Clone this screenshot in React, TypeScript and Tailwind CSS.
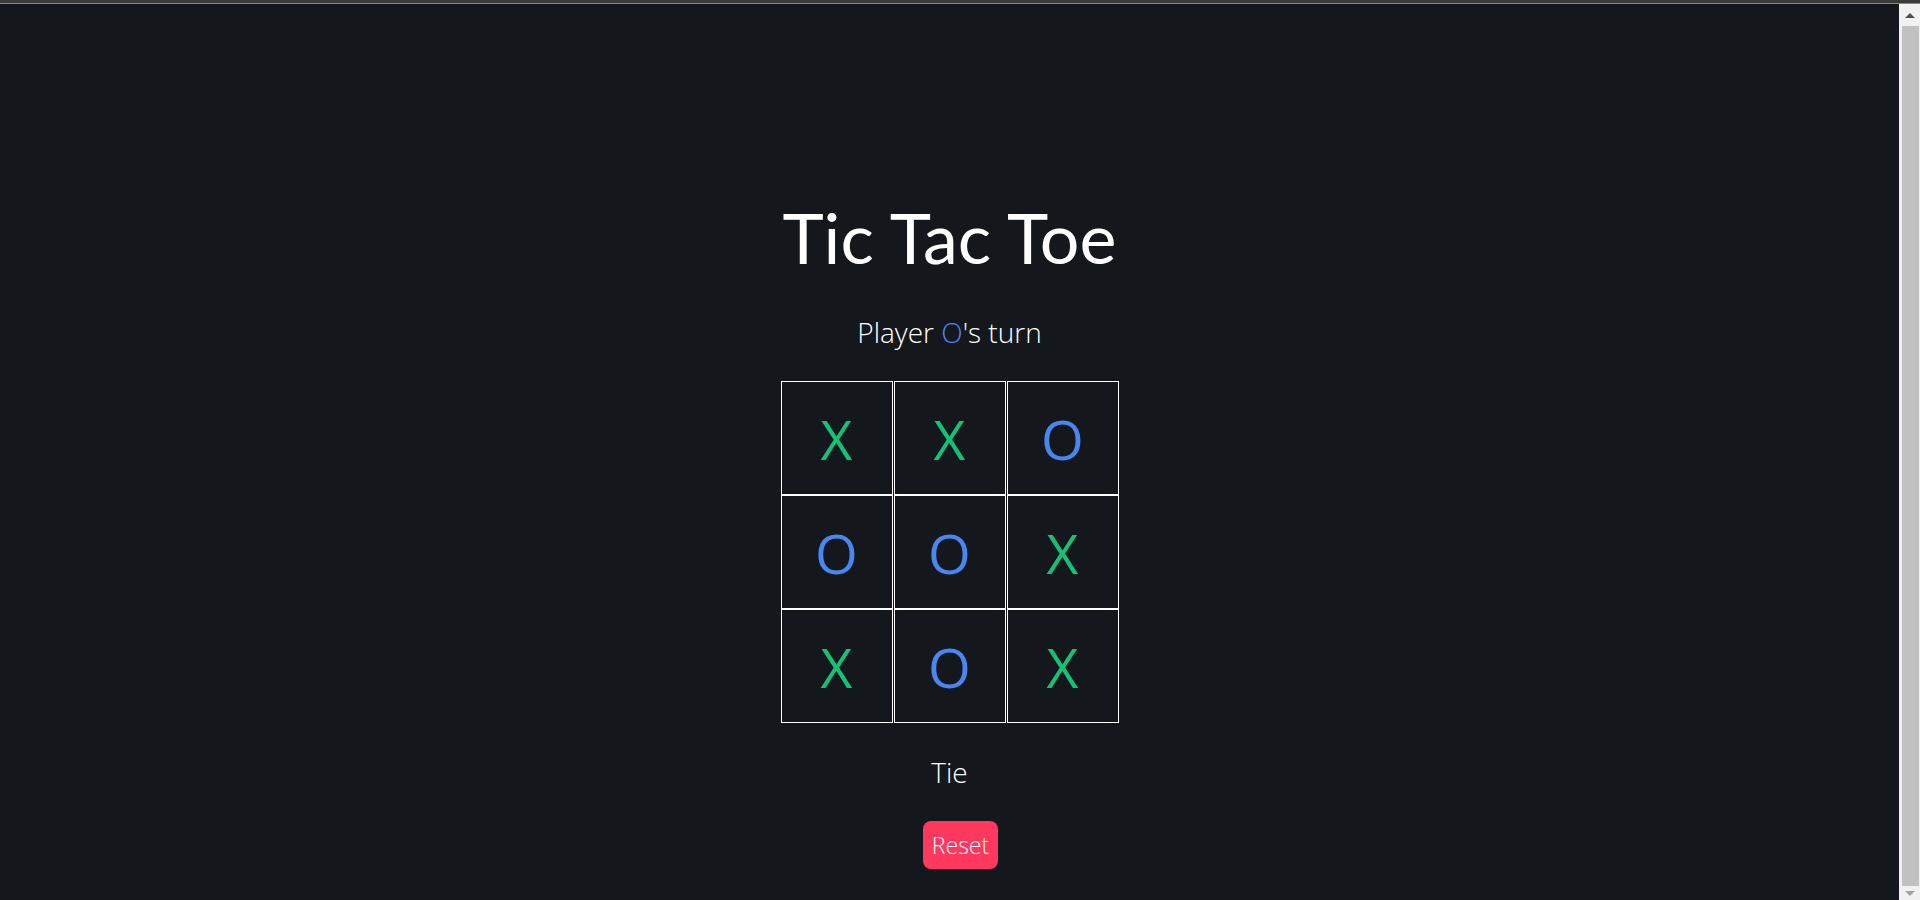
const board = ["X", "X", "O", "O", "O", "X", "X", "O", "X"]

function Cell({ value }: { value: string }) {
  return (
    <div className="flex h-[114px] w-[112px] items-center justify-center border border-white">
      <span
        className={
          value === "X"
            ? "text-[55px] leading-none font-normal text-[#12c277]"
            : "text-[55px] leading-none font-normal text-[#4a86f0]"
        }
      >
        {value}
      </span>
    </div>
  )
}

export default function App() {
  return (
    <div
      className="flex h-[900px] w-full flex-col overflow-hidden bg-[#14181c] text-white"
      style={{ fontFamily: '"Open Sans", "Noto Sans", sans-serif' }}
    >
      {/* window chrome strip */}
      <div className="h-[4px] shrink-0 border-b border-[#8a8a8a] bg-[#3a3a3a]" />
      <div className="flex flex-1">
        <main className="flex flex-1 flex-col items-center pt-[197px]">
          <h1 className="font-['Lato',sans-serif] text-[70px] leading-[72px] font-normal">Tic Tac Toe</h1>
          <p className="mt-[45px] text-[28px] leading-[28px] font-light">
            Player <span className="text-[#4a86f0]">O</span>'s turn
          </p>
          <div className="mt-[35px] grid grid-cols-3 gap-x-[1px]">
            {board.map((v, i) => (
              <Cell key={i} value={v} />
            ))}
          </div>
          <p className="mt-[35px] text-[28px] leading-[28px] font-light">Tie</p>
          <button className="mt-[35px] ml-[22px] flex h-[48px] w-[75px] items-center justify-center rounded-[8px] bg-[#ff3860] text-[23px] font-light text-white">
            Reset
          </button>
        </main>
        {/* scrollbar */}
        <div className="flex w-[21px] shrink-0 flex-col items-center bg-[#f1f1f1]">
          <div className="flex h-[22px] items-center justify-center">
            <div className="h-0 w-0 border-x-[5px] border-b-[5px] border-x-transparent border-b-[#505050]" />
          </div>
          <div className="ml-[1px] w-[17px] flex-1 bg-[#c1c1c1]" />
          <div className="flex h-[14px] items-center justify-center">
            <div className="h-0 w-0 border-x-[5px] border-t-[5px] border-x-transparent border-t-[#a3a3a3]" />
          </div>
        </div>
      </div>
    </div>
  )
}
